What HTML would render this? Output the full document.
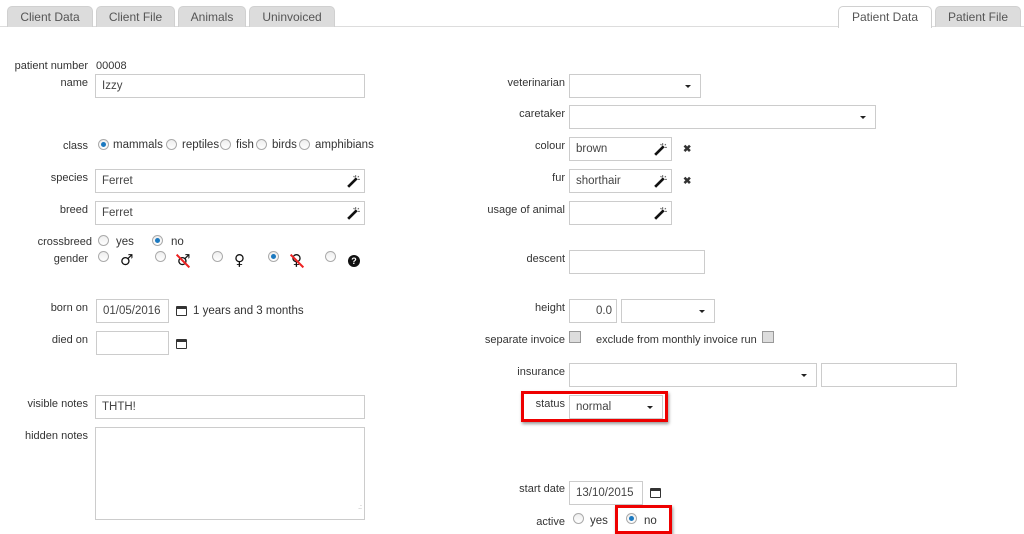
<!DOCTYPE html>
<html><head><style>
*{box-sizing:border-box}
body{margin:0;width:1024px;height:534px;background:#fff;font-family:"Liberation Sans",sans-serif;font-size:11px;color:#333;position:relative;overflow:hidden}
.a{position:absolute;white-space:nowrap}
.tab{position:absolute;top:6px;height:21px;background:#dcdcdc;border:1px solid #d0d0d0;border-bottom:none;border-radius:5px 5px 0 0;font-size:12px;color:#555;text-align:center;line-height:21px}
.lbl{position:absolute;text-align:right;white-space:nowrap}
.inp{position:absolute;border:1px solid #ccc;background:#fff;height:24px;padding-left:6px;line-height:22px;font-size:11.5px;color:#444}
.car{position:absolute;right:9px;top:10px;width:0;height:0;border-left:3px solid transparent;border-right:3px solid transparent;border-top:3px solid #222}
.wand{position:absolute;right:3px;top:4px;width:15px;height:15px}
.rad{position:absolute;width:11px;height:11px;border-radius:50%;border:1px solid #aaa;background:linear-gradient(#eee,#fff)}
.rad.on::after{content:"";position:absolute;left:2px;top:2px;width:5px;height:5px;border-radius:50%;background:#1b79c0}
.chk{position:absolute;width:12px;height:12px;border:1px solid #999;background:#ddd}
.cal{position:absolute;width:11px;height:10px;border:1.5px solid #333;border-top-width:3px;border-radius:1px}
.red{position:absolute;border:3px solid #e00;box-shadow:1px 2px 3px rgba(0,0,0,.4)}
.g{position:absolute;font-family:"DejaVu Sans",sans-serif;font-size:15px;font-weight:bold;color:#111;line-height:15px}
.t{position:absolute;white-space:nowrap;font-size:11.5px}
</style></head><body>
<div class="a" style="left:0;top:26px;width:1024px;height:1px;background:#ddd"></div>
<div class="tab" style="left:7px;width:86px">Client Data</div>
<div class="tab" style="left:96px;width:79px">Client File</div>
<div class="tab" style="left:178px;width:68px">Animals</div>
<div class="tab" style="left:249px;width:86px">Uninvoiced</div>
<div class="tab" style="left:838px;width:94px;background:#fff;height:22px">Patient Data</div>
<div class="tab" style="left:935px;width:86px">Patient File</div>

<div class="lbl" style="right:936px;top:60px">patient number</div>
<div class="a" style="left:96px;top:60px">00008</div>
<div class="lbl" style="right:936px;top:77px">name</div>
<div class="inp" style="left:95px;top:74px;width:270px">Izzy</div>

<div class="lbl" style="right:936px;top:140px">class</div>
<div class="rad on" style="left:98px;top:139px"></div><div class="t" style="left:113px;top:139px">mammals</div>
<div class="rad" style="left:166px;top:139px"></div><div class="t" style="left:182px;top:139px">reptiles</div>
<div class="rad" style="left:220px;top:139px"></div><div class="t" style="left:236px;top:139px">fish</div>
<div class="rad" style="left:256px;top:139px"></div><div class="t" style="left:272px;top:139px">birds</div>
<div class="rad" style="left:299px;top:139px"></div><div class="t" style="left:315px;top:139px">amphibians</div>

<div class="lbl" style="right:936px;top:172px">species</div>
<div class="inp" style="left:95px;top:169px;width:270px">Ferret<svg class="wand" viewBox="0 0 14 14"><path d="M2 12L10 4" stroke="#111" stroke-width="2.5"/><path d="M9 1v2M12 2l-1 1M13 5h-2M7 2l1 1" stroke="#666" stroke-width="1"/></svg></div>
<div class="lbl" style="right:936px;top:204px">breed</div>
<div class="inp" style="left:95px;top:201px;width:270px">Ferret<svg class="wand" viewBox="0 0 14 14"><path d="M2 12L10 4" stroke="#111" stroke-width="2.5"/><path d="M9 1v2M12 2l-1 1M13 5h-2M7 2l1 1" stroke="#666" stroke-width="1"/></svg></div>

<div class="lbl" style="right:932px;top:236px">crossbreed</div>
<div class="rad" style="left:98px;top:235px"></div><div class="t" style="left:116px;top:236px">yes</div>
<div class="rad on" style="left:152px;top:235px"></div><div class="t" style="left:171px;top:236px">no</div>
<div class="lbl" style="right:936px;top:253px">gender</div>
<div class="rad" style="left:98px;top:251px"></div><div class="g" style="left:120px;top:253px">♂</div>
<div class="rad" style="left:155px;top:251px"></div><div class="g" style="left:177px;top:253px">♂<span style="position:absolute;left:-3px;top:7px;width:18px;height:2px;background:#e22;transform:rotate(45deg)"></span></div>
<div class="rad" style="left:212px;top:251px"></div><div class="g" style="left:234px;top:253px">♀</div>
<div class="rad on" style="left:268px;top:251px"></div><div class="g" style="left:291px;top:253px">♀<span style="position:absolute;left:-3px;top:7px;width:18px;height:2px;background:#e22;transform:rotate(45deg)"></span></div>
<div class="rad" style="left:325px;top:251px"></div><div class="a" style="left:348px;top:255px;width:12px;height:12px;border-radius:50%;background:#111;color:#fff;font-size:9px;font-weight:bold;text-align:center;line-height:12px">?</div>

<div class="lbl" style="right:936px;top:302px">born on</div>
<div class="inp" style="left:96px;top:299px;width:73px">01/05/2016</div>
<div class="cal" style="left:176px;top:306px"></div>
<div class="t" style="left:193px;top:305px">1 years and 3 months</div>
<div class="lbl" style="right:936px;top:334px">died on</div>
<div class="inp" style="left:96px;top:331px;width:73px"></div>
<div class="cal" style="left:176px;top:339px"></div>

<div class="lbl" style="right:936px;top:398px">visible notes</div>
<div class="inp" style="left:95px;top:395px;width:270px">THTH!</div>
<div class="lbl" style="right:936px;top:430px">hidden notes</div>
<div class="inp" style="left:95px;top:427px;width:270px;height:93px"><span style="position:absolute;right:2px;bottom:0;font-size:7px;color:#999">.:</span></div>

<div class="lbl" style="right:459px;top:77px">veterinarian</div>
<div class="inp" style="left:569px;top:74px;width:132px"><i class="car"></i></div>
<div class="lbl" style="right:459px;top:108px">caretaker</div>
<div class="inp" style="left:569px;top:105px;width:307px"><i class="car"></i></div>
<div class="lbl" style="right:459px;top:140px">colour</div>
<div class="inp" style="left:569px;top:137px;width:103px">brown<svg class="wand" viewBox="0 0 14 14"><path d="M2 12L10 4" stroke="#111" stroke-width="2.5"/><path d="M9 1v2M12 2l-1 1M13 5h-2M7 2l1 1" stroke="#666" stroke-width="1"/></svg></div>
<div class="a" style="left:683px;top:144px;font-size:10px;font-weight:bold">✖</div>
<div class="lbl" style="right:459px;top:172px">fur</div>
<div class="inp" style="left:569px;top:169px;width:103px">shorthair<svg class="wand" viewBox="0 0 14 14"><path d="M2 12L10 4" stroke="#111" stroke-width="2.5"/><path d="M9 1v2M12 2l-1 1M13 5h-2M7 2l1 1" stroke="#666" stroke-width="1"/></svg></div>
<div class="a" style="left:683px;top:176px;font-size:10px;font-weight:bold">✖</div>
<div class="lbl" style="right:459px;top:204px">usage of animal</div>
<div class="inp" style="left:569px;top:201px;width:103px"><svg class="wand" viewBox="0 0 14 14"><path d="M2 12L10 4" stroke="#111" stroke-width="2.5"/><path d="M9 1v2M12 2l-1 1M13 5h-2M7 2l1 1" stroke="#666" stroke-width="1"/></svg></div>
<div class="lbl" style="right:459px;top:253px">descent</div>
<div class="inp" style="left:569px;top:250px;width:136px"></div>
<div class="lbl" style="right:459px;top:302px">height</div>
<div class="inp" style="left:569px;top:299px;width:48px;text-align:right;padding-right:4px">0.0</div>
<div class="inp" style="left:621px;top:299px;width:94px"><i class="car"></i></div>
<div class="lbl" style="right:459px;top:334px">separate invoice</div>
<div class="chk" style="left:569px;top:331px"></div>
<div class="a" style="left:596px;top:334px">exclude from monthly invoice run</div>
<div class="chk" style="left:762px;top:331px"></div>
<div class="lbl" style="right:459px;top:366px">insurance</div>
<div class="inp" style="left:569px;top:363px;width:248px"><i class="car"></i></div>
<div class="inp" style="left:821px;top:363px;width:136px"></div>
<div class="red" style="left:521px;top:391px;width:147px;height:31px"></div>
<div class="lbl" style="right:459px;top:398px">status</div>
<div class="inp" style="left:569px;top:395px;width:94px">normal<i class="car"></i></div>
<div class="lbl" style="right:459px;top:483px">start date</div>
<div class="inp" style="left:569px;top:481px;width:74px">13/10/2015</div>
<div class="cal" style="left:650px;top:488px"></div>
<div class="lbl" style="right:459px;top:516px">active</div>
<div class="rad" style="left:573px;top:513px"></div><div class="t" style="left:590px;top:515px">yes</div>
<div class="red" style="left:615px;top:505px;width:57px;height:29px"></div>
<div class="rad on" style="left:626px;top:513px"></div><div class="t" style="left:644px;top:515px">no</div>
</body></html>
